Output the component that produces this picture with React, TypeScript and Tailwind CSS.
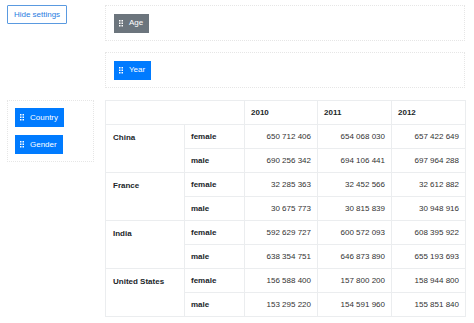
import { ReactNode } from "react";

type Row = { country: string; gender: string; values: string[] };

const rows: Row[] = [
  { country: "China", gender: "female", values: ["650 712 406", "654 068 030", "657 422 649"] },
  { country: "China", gender: "male", values: ["690 256 342", "694 106 441", "697 964 288"] },
  { country: "France", gender: "female", values: ["32 285 363", "32 452 566", "32 612 882"] },
  { country: "France", gender: "male", values: ["30 675 773", "30 815 839", "30 948 916"] },
  { country: "India", gender: "female", values: ["592 629 727", "600 572 093", "608 395 922"] },
  { country: "India", gender: "male", values: ["638 354 751", "646 873 890", "655 193 693"] },
  { country: "United States", gender: "female", values: ["156 588 400", "157 800 200", "158 944 800"] },
  { country: "United States", gender: "male", values: ["153 295 220", "154 591 960", "155 851 840"] },
];

function Grip() {
  return (
    <svg width="4" height="7" viewBox="0 0 4 7" className="shrink-0">
      {[0, 1, 2].map((r) =>
        [0, 1].map((c) => <rect key={`${r}-${c}`} x={c * 2.5} y={r * 2.5} width="1.5" height="1.5" fill="white" />)
      )}
    </svg>
  );
}

function Chip({ label, gray }: { label: string; gray?: boolean }) {
  return (
    <div
      className={`flex items-center gap-[6px] h-[19px] px-[5px] text-[8px] text-white w-fit ${
        gray ? "bg-[#6c757d]" : "bg-[#007bff]"
      }`}
    >
      <Grip />
      <span className="pr-[1px]">{label}</span>
    </div>
  );
}

function Panel({ children, className = "" }: { children: ReactNode; className?: string }) {
  return <div className={`border border-dotted border-[#e6e6e6] ${className}`}>{children}</div>;
}

export default function App() {
  return (
    <div
      className="w-[474px] h-[323px] bg-white text-[#212529] pt-[5px] pl-[7px] flex gap-[11px]"
      style={{ fontFamily: '"Liberation Sans", Arial, sans-serif' }}
    >
      <div className="w-[87px] flex flex-col">
        <button className="w-[60px] h-[19px] border border-[#5a9ae0] text-[#2a7de1] text-[8px] rounded-[1px] bg-white">
          Hide settings
        </button>
        <Panel className="mt-[76px] p-[7px] flex flex-col gap-[8px] h-[62px]">
          <Chip label="Country" />
          <Chip label="Gender" />
        </Panel>
      </div>

      <div className="w-[360px] flex flex-col">
        <Panel className="h-[36px] pl-[8px] flex items-center">
          <Chip label="Age" gray />
        </Panel>
        <Panel className="h-[36px] pl-[8px] mt-[11px] flex items-center">
          <Chip label="Year" />
        </Panel>

        <table className="mt-[12px] border-collapse table-fixed w-[360px] text-[8px]">
          <colgroup>
            <col className="w-[79px]" />
            <col className="w-[60px]" />
            <col className="w-[73px]" />
            <col className="w-[74px]" />
            <col className="w-[74px]" />
          </colgroup>
          <thead>
            <tr className="h-[24px]">
              <th colSpan={2} className="border border-[#ebedef]" />
              {["2010", "2011", "2012"].map((y) => (
                <th key={y} className="border border-[#ebedef] text-left font-bold pl-[6px]">
                  {y}
                </th>
              ))}
            </tr>
          </thead>
          <tbody>
            {rows.map((r, i) => (
              <tr key={i} className="h-[24px]">
                {i % 2 === 0 && (
                  <th
                    rowSpan={2}
                    className="border border-[#ebedef] text-left font-bold align-top pl-[7px] pt-[7px] whitespace-nowrap"
                  >
                    {r.country}
                  </th>
                )}
                <th className="border border-[#ebedef] text-left font-bold pl-[6px]">{r.gender}</th>
                {r.values.map((v, j) => (
                  <td key={j} className="border border-[#ebedef] text-right pr-[6px] text-[#333]">
                    {v}
                  </td>
                ))}
              </tr>
            ))}
          </tbody>
        </table>
      </div>
    </div>
  );
}
